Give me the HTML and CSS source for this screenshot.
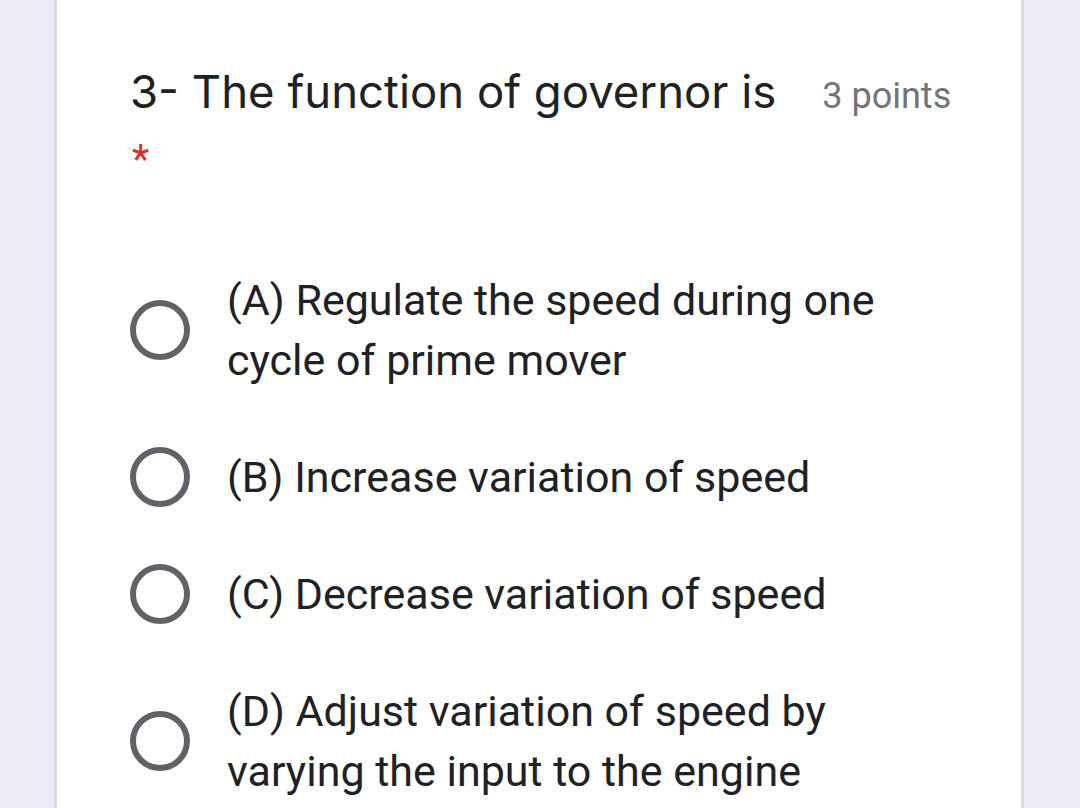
FILE: index.html
```html
<!DOCTYPE html>
<html>
<head>
<meta charset="utf-8">
<link rel="stylesheet" href="styles.css">
</head>
<body>
<div class="page">
  <div class="card">
    <div class="head">
      <div class="title">3- The function of governor is</div>
      <div class="points">3 points</div>
    </div>
    <div class="req">*</div>
    <div class="options">
      <div class="opt"><span class="radio"></span><span class="label">(A) Regulate the speed during one cycle of prime mover</span></div>
      <div class="opt"><span class="radio"></span><span class="label">(B) Increase variation of speed</span></div>
      <div class="opt"><span class="radio"></span><span class="label">(C) Decrease variation of speed</span></div>
      <div class="opt"><span class="radio"></span><span class="label">(D) Adjust variation of speed by varying the input to the engine</span></div>
    </div>
  </div>
</div>
</body>
</html>
```
FILE: styles.css
```css
html, body {
  margin: 0;
  padding: 0;
  background: #efeaf7;
}
.page {
  width: 1080px;
  height: 808px;
  overflow: hidden;
  padding-left: 54px;
  box-sizing: border-box;
}
.card {
  width: 970px;
  height: 808px;
  box-sizing: border-box;
  background: #fff;
  border-left: 3px solid #dcdcdf;
  border-right: 3px solid #dcdcdf;
  padding: 62px 0 0 73px;
}
.head {
  display: flex;
  align-items: baseline;
}
.title {
  font-family: Inter, sans-serif;
  font-size: 45.5px;
  color: #202124;
  line-height: 60px;
}
.points {
  font-family: Roboto, sans-serif;
  font-size: 36px;
  color: #70757a;
  margin-left: 46px;
}
.req {
  font-family: Roboto, sans-serif;
  color: #d93025;
  font-size: 40px;
  line-height: 40px;
  margin-top: 18px;
  padding-left: 2px;
}
.options {
  margin-top: 90px;
  display: flex;
  flex-direction: column;
  gap: 57px;
}
.opt {
  display: flex;
  align-items: center;
}
.radio {
  flex: none;
  width: 48px;
  height: 48px;
  border: 6px solid #5f6368;
  border-radius: 50%;
  margin-right: 37px;
}
.label {
  font-family: Roboto, sans-serif;
  font-size: 43px;
  line-height: 60px;
  color: #202124;
  width: 700px;
}
```
